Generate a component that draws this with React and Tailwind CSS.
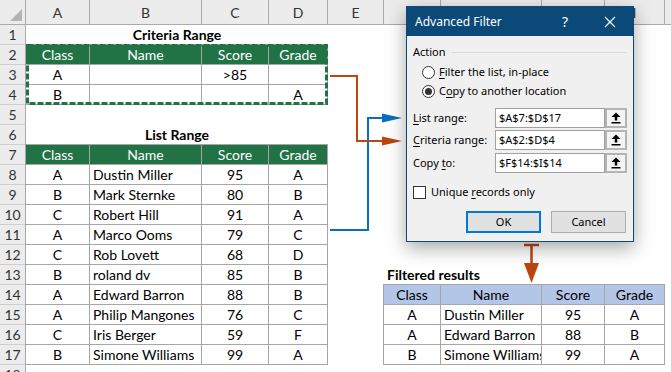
import React from 'react';

const headers = ['Class', 'Name', 'Score', 'Grade'];

const criteriaRows = [
  ['A', '', '>85', ''],
  ['B', '', '', 'A'],
];

const listRows = [
  ['A', 'Dustin Miller', '95', 'A'],
  ['B', 'Mark Sternke', '80', 'B'],
  ['C', 'Robert Hill', '91', 'A'],
  ['A', 'Marco Ooms', '79', 'C'],
  ['C', 'Rob Lovett', '68', 'D'],
  ['B', 'roland dv', '85', 'B'],
  ['A', 'Edward Barron', '88', 'B'],
  ['A', 'Philip Mangones', '76', 'C'],
  ['C', 'Iris Berger', '59', 'F'],
  ['B', 'Simone Williams', '99', 'A'],
];

const filteredRows = [
  ['A', 'Dustin Miller', '95', 'A'],
  ['A', 'Edward Barron', '88', 'B'],
  ['B', 'Simone Williams', '99', 'A'],
];

const colLetters = ['A', 'B', 'C', 'D', 'E', 'F', 'G', 'H', 'I', 'J'];

// one spreadsheet cell inside a bordered table
const Cell = ({ children, left, head }) => (
  <div
    className={`h-[20px] border-r border-b border-[#a6a6a6] overflow-hidden whitespace-nowrap leading-[19px] flex ${
      left ? 'justify-start pl-[3px]' : 'justify-center'
    } ${head}`}
  >
    {children}
  </div>
);

const Table = ({ place, cols, head, rows, children }) => (
  <div className={`${place} relative -mt-px -ml-px border-t border-l border-[#a6a6a6] grid ${cols} auto-rows-[20px]`}>
    {headers.map((h) => (
      <Cell key={h} head={head}>
        {h}
      </Cell>
    ))}
    {rows.map((r, i) =>
      r.map((v, j) => (
        <Cell key={`${i}-${j}`} left={j === 1}>
          {v}
        </Cell>
      ))
    )}
    {children}
  </div>
);

const Radio = ({ checked }) => (
  <span className="w-[13px] h-[13px] rounded-full border border-[#333] bg-white flex items-center justify-center">
    {checked && <span className="w-[7px] h-[7px] rounded-full bg-[#333]" />}
  </span>
);

const UpIcon = () => (
  <svg width="10" height="12" viewBox="0 0 10 12">
    <polygon points="5,0.5 0.5,5 9.5,5" fill="#000" />
    <rect x="3.75" y="4.5" width="2.5" height="4" fill="#000" />
    <rect x="0.5" y="10" width="9" height="1.5" fill="#000" />
  </svg>
);

const RangeRow = ({ label, value, mt }) => (
  <div className={`flex items-center h-[20px] ${mt}`}>
    <span className="w-[88px] pl-[6px]">{label}</span>
    <div className="w-[110px] h-[20px] border border-[#a0a0a0] bg-white flex items-center pl-[3px]">{value}</div>
    <div className="w-[22px] h-[20px] border-2 border-[#b4b4b4] bg-[#f4f4f4] flex items-center justify-center">
      <UpIcon />
    </div>
  </div>
);

const Dialog = () => (
  <div className="absolute left-[406px] top-[6px] w-[228px] h-[236px] bg-[#f0f0f0] border border-[#0b4a78] shadow-[0_6px_18px_rgba(0,0,0,0.35)] flex flex-col font-['Noto_Sans',sans-serif] text-[11px] text-black">
    {/* title bar */}
    <div className="h-[29px] bg-[#0b4a78] flex items-center text-white">
      <span className="pl-[8px] text-[12px]">Advanced Filter</span>
      <span className="ml-auto w-[44px] text-center text-[14px]">?</span>
      <span className="w-[46px] flex items-center justify-center">
        <svg width="12" height="12" viewBox="0 0 12 12">
          <path d="M1 1 L11 11 M11 1 L1 11" stroke="#fff" strokeWidth="1.2" />
        </svg>
      </span>
    </div>

    <div className="mt-[8px] h-[16px] flex items-center pl-[6px] pr-[6px]">
      <span>Action</span>
      <span className="flex-1 h-px bg-[#d9d9d9] ml-[6px]" />
    </div>

    <div className="mt-[4px] h-[16px] flex items-center pl-[15px] gap-[4px]">
      <Radio />
      <span>
        <u className="underline-offset-2">F</u>ilter the list, in-place
      </span>
    </div>
    <div className="mt-[3px] h-[16px] flex items-center pl-[15px] gap-[4px]">
      <Radio checked />
      <span>
        C<u className="underline-offset-2">o</u>py to another location
      </span>
    </div>

    <RangeRow
      mt="mt-[9px]"
      label={
        <>
          <u className="underline-offset-2">L</u>ist range:
        </>
      }
      value="$A$7:$D$17"
    />
    <RangeRow
      mt="mt-[2px]"
      label={
        <>
          <u className="underline-offset-2">C</u>riteria range:
        </>
      }
      value="$A$2:$D$4"
    />
    <RangeRow
      mt="mt-[3px]"
      label={
        <>
          Copy <u className="underline-offset-2">t</u>o:
        </>
      }
      value="$F$14:$I$14"
    />

    <div className="mt-[13px] h-[13px] flex items-center pl-[6px] gap-[5px]">
      <span className="w-[13px] h-[13px] border border-[#333] bg-white" />
      <span>
        Unique <u className="underline-offset-2">r</u>ecords only
      </span>
    </div>

    <div className="mt-[12px] flex justify-end gap-[10px] pr-[7px]">
      <button className="w-[75px] h-[22px] border-2 border-[#0078d7] bg-[#e1e1e1]">OK</button>
      <button className="w-[75px] h-[22px] border border-[#adadad] bg-[#e1e1e1]">Cancel</button>
    </div>
  </div>
);

const Arrows = () => (
  <svg className="absolute left-0 top-0 pointer-events-none" width="671" height="372">
    <path d="M330 230 H368 V118 H384" stroke="#0a6ebd" strokeWidth="2" fill="none" />
    <polygon points="382,113.5 402,118 382,122.5" fill="#0a6ebd" />
    <path d="M330 76 H357 V141 H384" stroke="#bd4510" strokeWidth="2" fill="none" />
    <polygon points="382,136.5 402,141 382,145.5" fill="#bd4510" />
    <path d="M524 245 H539 M531.5 245 V265" stroke="#bd4510" strokeWidth="2.5" fill="none" />
    <polygon points="524,263 539,263 531.5,283" fill="#bd4510" />
  </svg>
);

export default function App() {
  return (
    <div className="relative w-[671px] h-[372px] overflow-hidden bg-white font-['Lato','Liberation_Sans',sans-serif] text-[14px] text-black">
      {/* column headers */}
      <div className="grid grid-cols-[26px_64px_112px_67px_59px_56px_57px_101px_63px_60px_80px] h-[25px] bg-[#ececec] text-[#333]">
        <div className="relative border-r border-b border-[#ababab]">
          <svg className="absolute right-[3px] bottom-[3px]" width="12" height="12" viewBox="0 0 12 12">
            <polygon points="12,0 12,12 0,12" fill="#b4b4b4" />
          </svg>
        </div>
        {colLetters.map((l) => (
          <div key={l} className="border-r border-b border-[#ababab] flex items-center justify-center">
            {l}
          </div>
        ))}
      </div>

      <div className="flex">
        {/* row headers */}
        <div className="w-[26px] shrink-0 flex flex-col bg-[#ececec] text-[#333]">
          {Array.from({ length: 18 }, (_, i) => (
            <div key={i} className="h-[20px] border-r border-b border-[#cfcfcf] border-r-[#ababab] flex items-center justify-center">
              {i + 1}
            </div>
          ))}
        </div>

        {/* sheet */}
        <div className="shrink-0 grid grid-cols-[64px_112px_67px_59px_56px_57px_101px_63px_60px_80px] grid-rows-[repeat(18,20px)]">
          <div className="col-start-1 col-span-4 row-start-1 text-center font-bold leading-[19px]">Criteria Range</div>
          <Table
            place="col-start-1 col-span-4 row-start-2 row-span-3"
            cols="grid-cols-[64px_112px_67px_59px]"
            head="bg-[#217346] text-white"
            rows={criteriaRows}
          >
            <svg className="absolute -left-px -top-px pointer-events-none" width="303" height="61">
              <rect x="2.5" y="1.5" width="299" height="58" fill="none" stroke="#217346" strokeWidth="3" strokeDasharray="6 2" />
            </svg>
          </Table>

          <div className="col-start-1 col-span-4 row-start-6 text-center font-bold leading-[19px]">List Range</div>
          <Table
            place="col-start-1 col-span-4 row-start-7 row-span-11"
            cols="grid-cols-[64px_112px_67px_59px]"
            head="bg-[#217346] text-white"
            rows={listRows}
          />

          <div className="col-start-6 col-span-2 row-start-13 pl-[3px] font-bold leading-[19px] whitespace-nowrap">Filtered results</div>
          <Table
            place="col-start-6 col-span-4 row-start-14 row-span-4"
            cols="grid-cols-[57px_101px_63px_60px]"
            head="bg-[#b4c6e7]"
            rows={filteredRows}
          />
        </div>
      </div>

      <Arrows />
      <Dialog />
    </div>
  );
}
